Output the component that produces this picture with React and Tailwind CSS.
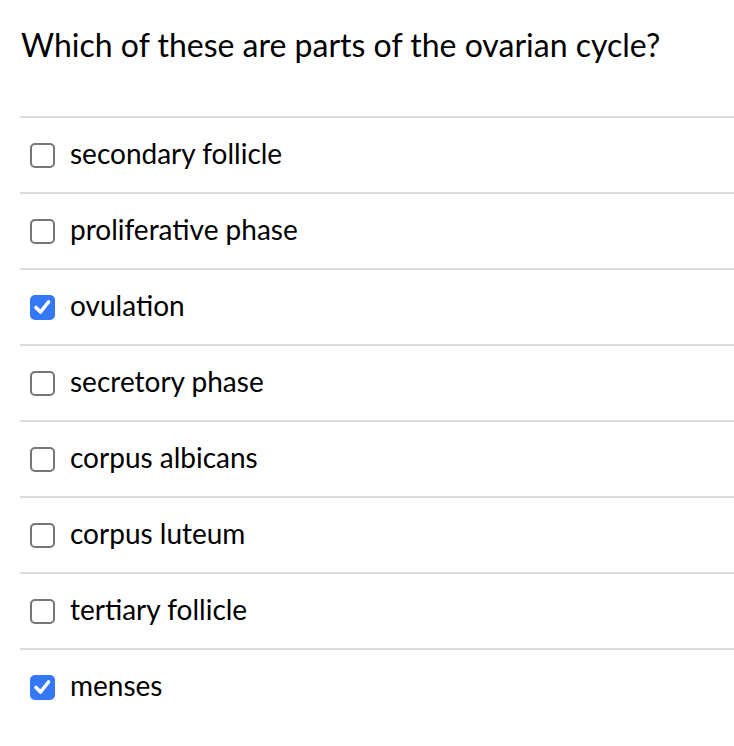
import React from "react";

const items = [
  ["secondary follicle", false],
  ["proliferative phase", false],
  ["ovulation", true],
  ["secretory phase", false],
  ["corpus albicans", false],
  ["corpus luteum", false],
  ["tertiary follicle", false],
  ["menses", true],
];

function Box({ checked }) {
  if (checked) {
    return (
      <div className="w-[25px] h-[25px] rounded-[5px] bg-[#3478f6] flex items-center justify-center shrink-0">
        <svg width="19" height="19" viewBox="0 0 19 19">
          <path d="M3 9.5 L7.5 14 L15.5 4" fill="none" stroke="white" strokeWidth="3.6" strokeLinecap="round" strokeLinejoin="round" />
        </svg>
      </div>
    );
  }
  return <div className="w-[25px] h-[25px] rounded-[5px] border-2 border-[#767676] bg-white shrink-0" />;
}

export default function App() {
  return (
    <div className="w-[734px] h-[746px] bg-white text-black" style={{ fontFamily: "Lato, 'Noto Sans', sans-serif" }}>
      <div className="pl-[21px] pt-[22px] h-[116px]">
        <h1 className="text-[32px] leading-[46px] font-normal">Which of these are parts of the ovarian cycle?</h1>
      </div>
      <div className="ml-[20px]">
        {items.map(([label, checked]) => (
          <div key={label} className="border-t-2 border-[#dcdcdc] h-[76px] flex items-center pl-[10px] gap-[15px]">
            <Box checked={checked} />
            <span className="text-[28px] leading-none -mt-[5px]">{label}</span>
          </div>
        ))}
      </div>
    </div>
  );
}
